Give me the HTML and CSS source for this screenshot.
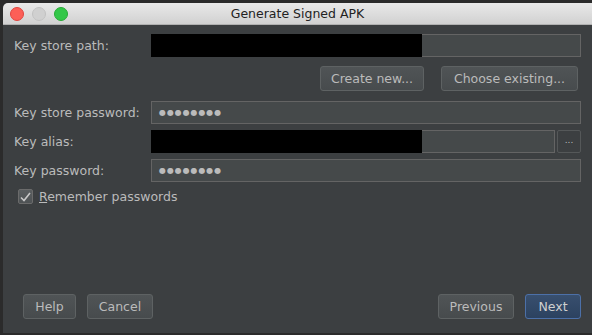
FILE: index.html
```html
<!doctype html>
<html lang="en">
<head>
    <meta charset="UTF-8">
    <title>Generate Signed APK</title>
    <link rel="stylesheet" href="styles.css">
</head>
<body>
    <div class="window">
        <div class="titlebar">
            <div class="lights">
                <span class="light red"></span>
                <span class="light gray"></span>
                <span class="light green"></span>
            </div>
            <div class="title">Generate Signed APK</div>
        </div>

        <div class="content">
            <div class="row first">
                <label class="label">Key store path:</label>
                <div class="field"><span class="redact"></span></div>
            </div>

            <div class="actions">
                <button class="btn create">Create new...</button>
                <button class="btn choose">Choose existing...</button>
            </div>

            <div class="row pwd">
                <label class="label">Key store password:</label>
                <div class="field"><span class="dots">&#9679;&#9679;&#9679;&#9679;&#9679;&#9679;&#9679;&#9679;</span></div>
            </div>

            <div class="row">
                <label class="label">Key alias:</label>
                <div class="field"><span class="redact"></span></div>
                <button class="more">...</button>
            </div>

            <div class="row">
                <label class="label">Key password:</label>
                <div class="field"><span class="dots">&#9679;&#9679;&#9679;&#9679;&#9679;&#9679;&#9679;&#9679;</span></div>
            </div>

            <div class="remember">
                <span class="checkbox">
                    <svg width="11" height="10" viewBox="0 0 11 10">
                        <path d="M1 5.5 L4 8.5 L10 1" fill="none" stroke="#c8c8c8" stroke-width="1.6"/>
                    </svg>
                </span>
                <span class="check-label"><u>R</u>emember passwords</span>
            </div>
        </div>

        <div class="footer">
            <div class="left">
                <button class="btn help">Help</button>
                <button class="btn cancel">Cancel</button>
            </div>
            <div class="right">
                <button class="btn previous">Previous</button>
                <button class="btn next">Next</button>
            </div>
        </div>
    </div>
</body>
</html>
```

FILE: styles.css
```css
body {
    margin: 0;
    background-color: #2b2b2b;
    font-family: "DejaVu Sans", "Noto Sans", sans-serif;
    overflow: hidden;
}

.window {
    margin: 3px 0 0 3px;
    height: 330px;
    background-color: #3c3f41;
    display: flex;
    flex-direction: column;
    border-radius: 5px 0 0 0;
    overflow: hidden;
}

.titlebar {
    height: 21px;
    flex: none;
    display: flex;
    align-items: center;
    position: relative;
    background: linear-gradient(#e9e9e9, #d1d1d1);
    border-bottom: 1px solid #b1b1b1;
}

.lights {
    display: flex;
    gap: 8px;
    padding-left: 7px;
}

.light {
    width: 12px;
    height: 12px;
    border-radius: 50%;
}

.red { background-color: #fc5f57; border: 0.5px solid #e0443e; }
.gray { background-color: #d0d0d0; border: 0.5px solid #c2c2c2; }
.green { background-color: #33c748; border: 0.5px solid #27aa35; }

.title {
    position: absolute;
    left: 0;
    right: 0;
    text-align: center;
    font-size: 12.5px;
    color: #222222;
}

.content {
    padding: 9px 11px 0 11px;
    flex: 1;
}

.row {
    display: flex;
    align-items: center;
    margin-top: 6px;
    height: 23px;
}

.row.first {
    margin-top: 0;
}

.row.pwd {
    margin-top: 10px;
}

.label {
    width: 137px;
    flex: none;
    font-size: 12.5px;
    color: #bbbbbb;
}

.field {
    flex: 1;
    height: 21px;
    border: 1px solid #646464;
    background-color: #45494a;
    display: flex;
    align-items: center;
}

.redact {
    width: 271px;
    height: 23px;
    margin-left: -1px;
    background-color: #000000;
    align-self: flex-start;
    margin-top: -1px;
}

.dots {
    color: #bbbbbb;
    font-size: 8px;
    letter-spacing: 0.9px;
    padding-left: 7px;
}

.more {
    width: 24px;
    height: 23px;
    margin-left: 2px;
    background-color: #3c3f41;
    border: 1px solid #555859;
    border-radius: 2px;
    color: #bbbbbb;
    font-size: 9px;
    padding: 0 0 3px 0;
    font-family: inherit;
}

.actions {
    display: flex;
    justify-content: flex-end;
    gap: 17px;
    margin-top: 9px;
    margin-bottom: 10px;
    padding-right: 3px;
}

.btn {
    height: 25px;
    background: linear-gradient(#505456, #474b4d);
    border: 1px solid #5e6263;
    border-radius: 3px;
    color: #bbbbbb;
    font-family: inherit;
    font-size: 12.5px;
    padding: 0;
}

.create { width: 104px; }
.choose { width: 137px; }

.remember {
    display: flex;
    align-items: center;
    margin-top: 7px;
    padding-left: 4px;
}

.checkbox {
    width: 13px;
    height: 13px;
    border: 1px solid #6b6b6b;
    border-radius: 2px;
    background: linear-gradient(#5a5e60, #4e5254);
    display: flex;
    align-items: center;
    justify-content: center;
}

.check-label {
    margin-left: 6px;
    font-size: 12.5px;
    color: #bbbbbb;
}

.footer {
    display: flex;
    justify-content: space-between;
    padding: 0 11px 14px 20px;
}

.left, .right {
    display: flex;
    gap: 11px;
}

.help { width: 53px; }
.cancel { width: 66px; }
.previous { width: 76px; }

.next {
    width: 56px;
    background: linear-gradient(#384f6e, #2c4260);
    border: 1px solid #4c70a8;
    color: #d0d0d0;
}
```
